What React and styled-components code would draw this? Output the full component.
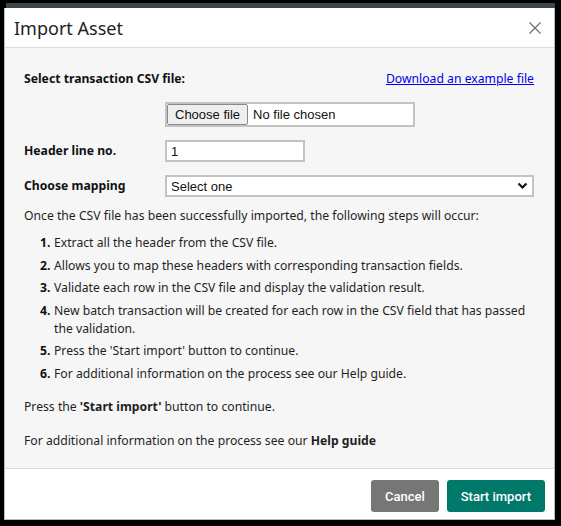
import React from "react";
import styled, { createGlobalStyle } from "styled-components";

const Global = createGlobalStyle`
  html, body { margin: 0; padding: 0; background: #000; }
  * { box-sizing: border-box; }
`;

const Frame = styled.div`
  width: 561px;
  height: 526px;
  background: #000;
  padding: 3px 6px 6px 4px;
  display: flex;
  flex-direction: column;
`;

const Backdrop = styled.div`
  height: 5px;
  background: #3b474c;
  margin-left: 2px;
  flex-shrink: 0;
`;

const Modal = styled.div`
  flex: 1;
  display: flex;
  flex-direction: column;
  background: #fff;
  border: 1px solid #b9b9b9;
  border-top: none;
  font-family: "Noto Sans", "Open Sans", sans-serif;
  color: #1f1f1f;
`;

const Header = styled.div`
  height: 40px;
  display: flex;
  align-items: center;
  justify-content: space-between;
  padding: 0 12px 0 9px;
  border-bottom: 1px solid #dcdcdc;
`;

const Title = styled.h1`
  margin: 0;
  font-size: 18px;
  font-weight: 400;
  color: #222;
`;

const CloseBtn = styled.button`
  border: none;
  background: none;
  padding: 0;
  width: 14px;
  height: 14px;
  display: flex;
  cursor: pointer;
`;

const Body = styled.div`
  flex: 1;
  background: #f6f6f6;
  padding: 22px 20px 0 19px;
  font-size: 12.2px;
  line-height: 18px;
`;

const TopRow = styled.div`
  display: flex;
  justify-content: space-between;
  align-items: center;
`;

const Label = styled.label`
  font-weight: 700;
  color: #111;
`;

const Link = styled.a`
  color: #0000ee;
  text-decoration: underline;
`;

const FormGrid = styled.div`
  display: grid;
  grid-template-columns: 141px 1fr;
  row-gap: 13px;
  align-items: center;
  margin-top: 14px;
`;

const FileBox = styled.div`
  grid-column: 2;
  width: 250px;
  height: 25px;
  border: 2px solid #c3c3c3;
  background: #fff;
  display: flex;
  align-items: center;
  gap: 5px;
  font-family: "Liberation Sans", Arial, sans-serif;
  font-size: 13px;
  color: #111;
`;

const FileButton = styled.span`
  height: 21px;
  padding: 0 7px;
  display: flex;
  align-items: center;
  background: #efefef;
  border: 1px solid #8a8a8a;
  border-radius: 2px;
`;

const TextInput = styled.input`
  width: ${p => p.$width || "100%"};
  height: 22px;
  border: 2px solid #c3c3c3;
  background: #fff;
  padding: 0 4px;
  font-family: "Liberation Sans", Arial, sans-serif;
  font-size: 13px;
  color: #111;
  outline: none;
`;

const SelectWrap = styled.div`
  position: relative;
`;

const Select = styled.select`
  appearance: none;
  width: 100%;
  height: 22px;
  border: 2px solid #c3c3c3;
  background: #fff;
  padding: 0 4px;
  font-family: "Liberation Sans", Arial, sans-serif;
  font-size: 13px;
  color: #111;
  outline: none;
`;

const Chevron = styled.svg`
  position: absolute;
  right: 6px;
  top: 7px;
  pointer-events: none;
`;

const Para = styled.p`
  margin: ${p => p.$margin || "0"};
`;

const Steps = styled.ol`
  list-style: none;
  margin: 9px 0 0;
  padding: 0 0 0 16px;
`;

const Step = styled.li`
  display: flex;
  margin-bottom: 4.5px;
`;

const StepNum = styled.b`
  width: 14px;
  flex-shrink: 0;
  color: #111;
`;

const Footer = styled.div`
  height: 51px;
  border-top: 1px solid #dcdcdc;
  display: flex;
  justify-content: flex-end;
  align-items: flex-start;
  gap: 8px;
  padding: 11px 9px 0;
`;

const Button = styled.button`
  height: 32px;
  padding: 0 14px;
  border: none;
  border-radius: 3px;
  background: ${p => p.$bg};
  color: #fff;
  font-family: Roboto, "Liberation Sans", sans-serif;
  font-size: 13px;
  font-weight: 500;
  cursor: pointer;
`;

const steps = [
  "Extract all the header from the CSV file.",
  "Allows you to map these headers with corresponding transaction fields.",
  "Validate each row in the CSV file and display the validation result.",
  "New batch transaction will be created for each row in the CSV field that has passed the validation.",
  "Press the 'Start import' button to continue.",
  "For additional information on the process see our Help guide.",
];

export default function App() {
  return (
    <>
      <Global />
      <Frame>
        <Backdrop />
        <Modal>
          <Header>
            <Title>Import Asset</Title>
            <CloseBtn aria-label="Close">
              <svg width="14" height="14" viewBox="0 0 14 14">
                <path d="M1.5 1.5 L12.5 12.5 M12.5 1.5 L1.5 12.5" stroke="#6f6f6f" strokeWidth="1.2" />
              </svg>
            </CloseBtn>
          </Header>
          <Body>
            <TopRow>
              <Label>Select transaction CSV file:</Label>
              <Link href="#">Download an example file</Link>
            </TopRow>
            <FormGrid>
              <FileBox>
                <FileButton>Choose file</FileButton>
                <span>No file chosen</span>
              </FileBox>
              <Label>Header line no.</Label>
              <TextInput $width="140px" defaultValue="1" />
              <Label>Choose mapping</Label>
              <SelectWrap>
                <Select defaultValue="">
                  <option value="">Select one</option>
                </Select>
                <Chevron width="11" height="8" viewBox="0 0 11 8">
                  <path d="M1.5 1.5 L5.5 5.5 L9.5 1.5" fill="none" stroke="#111" strokeWidth="2.2" />
                </Chevron>
              </SelectWrap>
            </FormGrid>
            <Para $margin="10px 0 0">
              Once the CSV file has been successfully imported, the following steps will occur:
            </Para>
            <Steps>
              {steps.map((s, i) => (
                <Step key={i}>
                  <StepNum>{i + 1}.</StepNum>
                  <span>{s}</span>
                </Step>
              ))}
            </Steps>
            <Para $margin="15px 0 0">
              Press the <b>'Start import'</b> button to continue.
            </Para>
            <Para $margin="16px 0 0">
              For additional information on the process see our <b>Help guide</b>
            </Para>
          </Body>
          <Footer>
            <Button $bg="#767676">Cancel</Button>
            <Button $bg="#00796b">Start import</Button>
          </Footer>
        </Modal>
      </Frame>
    </>
  );
}
